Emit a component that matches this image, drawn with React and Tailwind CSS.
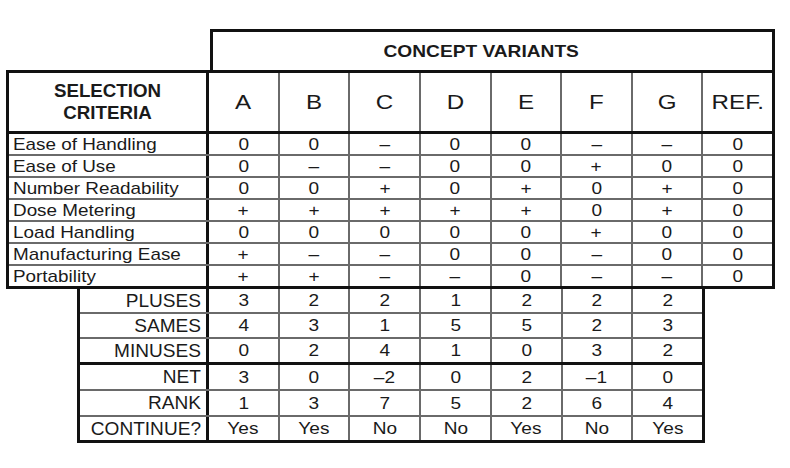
import React from 'react';

const COLS = ['A', 'B', 'C', 'D', 'E', 'F', 'G', 'REF.'];

// criteria scores per concept, REF. is the datum column
const CRITERIA = [
  { name: 'Ease of Handling', scores: ['0', '0', '–', '0', '0', '–', '–', '0'] },
  { name: 'Ease of Use', scores: ['0', '–', '–', '0', '0', '+', '0', '0'] },
  { name: 'Number Readability', scores: ['0', '0', '+', '0', '+', '0', '+', '0'] },
  { name: 'Dose Metering', scores: ['+', '+', '+', '+', '+', '0', '+', '0'] },
  { name: 'Load Handling', scores: ['0', '0', '0', '0', '0', '+', '0', '0'] },
  { name: 'Manufacturing Ease', scores: ['+', '–', '–', '0', '0', '–', '0', '0'] },
  { name: 'Portability', scores: ['+', '+', '–', '–', '0', '–', '–', '0'] },
];

const SUMMARY = [
  { label: 'PLUSES', values: ['3', '2', '2', '1', '2', '2', '2'], h: 'h-[25px]', line: 'border-b-2 border-[#6a6a6a]' },
  { label: 'SAMES', values: ['4', '3', '1', '5', '5', '2', '3'], h: 'h-[25px]', line: 'border-b-2 border-[#6a6a6a]' },
  { label: 'MINUSES', values: ['0', '2', '4', '1', '0', '3', '2'], h: 'h-[26px]', line: 'border-b-[3px] border-[#111]' },
  { label: 'NET', values: ['3', '0', '–2', '0', '2', '–1', '0'], h: 'h-[26px]', line: 'border-b-2 border-[#6a6a6a]' },
  { label: 'RANK', values: ['1', '3', '7', '5', '2', '6', '4'], h: 'h-[26px]', line: 'border-b-2 border-[#6a6a6a]' },
  { label: 'CONTINUE?', values: ['Yes', 'Yes', 'No', 'No', 'Yes', 'No', 'Yes'], h: 'h-[23px]', line: '' },
];

const Cell = ({ first, children, className = '' }) => (
  <div className={`flex-1 flex items-center justify-center ${first ? '' : 'border-l-2 border-[#6a6a6a]'}`}>
    <span className={`inline-block ${className}`}>{children}</span>
  </div>
);

export default function App() {
  return (
    <div className="w-[790px] h-[468px] bg-white text-[#1a1a1a] font-['Liberation_Sans',Arial,sans-serif] pt-[29px] pl-[6px]">
      <div className="w-[769px]">
        {/* concept variants banner */}
        <div className="flex">
          <div className="w-[204px]" />
          <div className="flex-1 h-[41px] border-t-[3px] border-x-[3px] border-[#111] flex items-center justify-center pr-[22px]">
            <span className="inline-block text-[16.5px] font-bold scale-x-[1.16]">CONCEPT VARIANTS</span>
          </div>
        </div>

        {/* main matrix */}
        <div className="border-[3px] border-[#111]">
          <div className="flex h-[61px] border-b-[3px] border-[#111]">
            <div className="w-[200px] border-r-[3px] border-[#111] flex flex-col items-center justify-center text-[18px] leading-[22px] font-bold">
              <span className="inline-block scale-x-[1.04]">SELECTION</span>
              <span className="inline-block scale-x-[1.04]">CRITERIA</span>
            </div>
            {COLS.map((c, i) => (
              <Cell key={c} first={i === 0} className="text-[21px] scale-x-[1.15]">
                {c}
              </Cell>
            ))}
          </div>

          {CRITERIA.map((row, r) => (
            <div
              key={row.name}
              className={`flex ${r < CRITERIA.length - 1 ? 'h-[22px] border-b-2 border-[#6a6a6a]' : 'h-[20px]'}`}
            >
              <div className="w-[200px] border-r-[3px] border-[#111] flex items-center pl-[4px] leading-none">
                <span className="inline-block text-[17px] scale-x-[1.11] origin-left">{row.name}</span>
              </div>
              {row.scores.map((s, i) => (
                <Cell key={i} first={i === 0} className="text-[17px] leading-none scale-x-[1.12]">
                  {s}
                </Cell>
              ))}
            </div>
          ))}
        </div>

        {/* totals */}
        <div className="ml-[71px] w-[628px] border-x-[3px] border-b-[3px] border-[#111]">
          {SUMMARY.map((row) => (
            <div key={row.label} className={`flex ${row.h} ${row.line}`}>
              <div className="w-[129px] border-r-[3px] border-[#111] flex items-center justify-end pr-[5px] leading-none">
                <span className="inline-block text-[18px] scale-x-[1.06] origin-right">{row.label}</span>
              </div>
              {row.values.map((v, i) => (
                <Cell key={i} first={i === 0} className="text-[17px] leading-none scale-x-[1.12]">
                  {v}
                </Cell>
              ))}
            </div>
          ))}
        </div>
      </div>
    </div>
  );
}
